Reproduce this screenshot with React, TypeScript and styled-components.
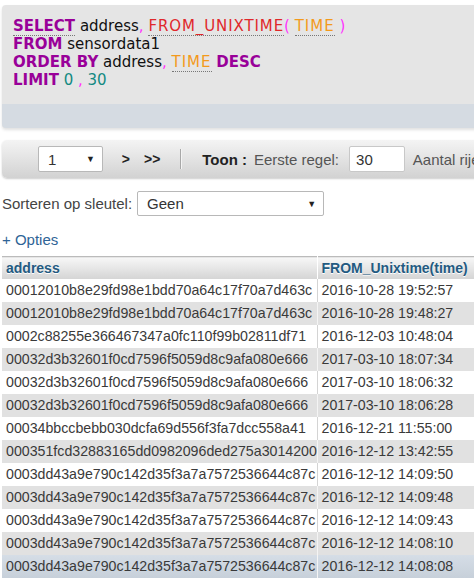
import React from 'react'
import styled, { createGlobalStyle } from 'styled-components'

const GlobalStyle = createGlobalStyle`
  html, body {
    margin: 0;
    padding: 0;
    background: #fff;
    overflow: hidden;
  }
  body {
    font-family: "Liberation Sans", Arial, sans-serif;
    font-size: 14px;
    color: #333;
  }
`

const Page = styled.div`
  width: 474px;
  height: 579px;
  overflow: hidden;
  padding-top: 5px;
  box-sizing: border-box;
`

const SqlOuter = styled.div`
  margin-left: 2px;
  width: 480px;
  background: #e5e5e5;
  border-radius: 4px 0 0 4px;
  box-shadow: 0 2px 3px rgba(0, 0, 0, 0.12);
  overflow: hidden;
`

const SqlCode = styled.pre`
  margin: 0;
  padding: 12px 0 0 11px;
  height: 99px;
  box-sizing: border-box;
  font-family: "DejaVu Sans", Verdana, sans-serif;
  font-size: 15px;
  line-height: 18px;
  color: #111;
  white-space: pre;
`

const Tools = styled.div`
  height: 24px;
  background: #d5dbe2;
`

const Kw = styled.span<{ $doc?: boolean }>`
  color: #990099;
  font-weight: bold;
  border-bottom: ${p => (p.$doc ? '1px dotted #777' : 'none')};
`

const Fn = styled.span`
  color: #e0282b;
  letter-spacing: 0.9px;
  border-bottom: 1px dotted #777;
`

const Col = styled.span<{ $doc?: boolean }>`
  color: #f39a1c;
  letter-spacing: 1px;
  border-bottom: ${p => (p.$doc ? '1px dotted #777' : 'none')};
`

const Punc = styled.span`
  color: #ff33ff;
`

const Num = styled.span`
  color: #138a82;
`

const Navigation = styled.div`
  margin: 12px 0 0 2px;
  width: 490px;
  height: 38px;
  display: flex;
  align-items: center;
  background: linear-gradient(#f4f4f4, #d2d2d2);
  border-radius: 5px;
  box-shadow: 0 1px 2px rgba(0, 0, 0, 0.2);
  white-space: nowrap;
`

const Gap = styled.span<{ $w: number }>`
  width: ${p => p.$w}px;
  flex: none;
`

const SelectBox = styled.div<{ $width: number; $height: number }>`
  width: ${p => p.$width}px;
  height: ${p => p.$height}px;
  box-sizing: border-box;
  display: flex;
  align-items: center;
  justify-content: space-between;
  padding: 0 7px 0 9px;
  background: #fff;
  border: 1px solid #b8b8b8;
  border-radius: 2px;
  color: #333;
  font-size: 15px;
`

const Caret = styled.span`
  font-size: 9px;
  color: #222;
`

const NavLink = styled.span`
  font-weight: bold;
  color: #222;
  font-size: 14px;
`

const Sep = styled.span`
  width: 1px;
  height: 20px;
  background: #a8a8a8;
  box-shadow: 1px 0 0 #f4f4f4;
`

const Label = styled.span<{ $bold?: boolean }>`
  font-size: 15px;
  color: ${p => (p.$bold ? '#222' : '#555')};
  font-weight: ${p => (p.$bold ? 'bold' : 'normal')};
`

const TextInput = styled.div`
  width: 61px;
  height: 26px;
  box-sizing: border-box;
  background: #fff;
  border: 1px solid #c8c8c8;
  border-radius: 2px;
  padding-left: 6px;
  display: flex;
  align-items: center;
  font-size: 15px;
  color: #333;
`

const SortRow = styled.div`
  margin: 13px 0 0 2px;
  display: flex;
  align-items: center;
  gap: 5px;
  font-size: 15px;
  color: #444;
`

const Options = styled.div`
  margin: 15px 0 0 2px;
  height: 18px;
  line-height: 18px;
  font-size: 15px;
  color: #2f6496;
`

const Table = styled.table`
  margin: 7px 0 0 2px;
  border-collapse: collapse;
  table-layout: fixed;
  width: 480px;
`

const Th = styled.th<{ $w: number }>`
  width: ${p => p.$w}px;
  height: 22px;
  padding: 0 4px;
  text-align: left;
  font-size: 14px;
  font-weight: bold;
  color: #235a81;
  text-shadow: 0 1px 0 #fff;
  background: linear-gradient(#f7f7f7, #d4d4d4);
  border-top: 1px solid #bbb;
  border-right: 1px solid #fff;
  box-sizing: border-box;
  white-space: nowrap;
`

const Row = styled.tr<{ $tone: 'odd' | 'even' | 'hover' }>`
  height: 23px;
  background: ${p =>
    p.$tone === 'hover'
      ? 'linear-gradient(#d5dde6, #c7d0da)'
      : p.$tone === 'even'
        ? '#e1e1e1'
        : '#fff'};
`

const Td = styled.td<{ $line: string }>`
  padding: 0 4px;
  font-size: 14.2px;
  color: #3a3a3a;
  white-space: nowrap;
  overflow: hidden;
  border-right: 1px solid ${p => p.$line};
`

const rows: [string, string][] = [
  ['00012010b8e29fd98e1bdd70a64c17f70a7d463c', '2016-10-28 19:52:57'],
  ['00012010b8e29fd98e1bdd70a64c17f70a7d463c', '2016-10-28 19:48:27'],
  ['0002c88255e366467347a0fc110f99b02811df71', '2016-12-03 10:48:04'],
  ['00032d3b32601f0cd7596f5059d8c9afa080e666', '2017-03-10 18:07:34'],
  ['00032d3b32601f0cd7596f5059d8c9afa080e666', '2017-03-10 18:06:32'],
  ['00032d3b32601f0cd7596f5059d8c9afa080e666', '2017-03-10 18:06:28'],
  ['00034bbccbebb030dcfa69d556f3fa7dcc558a41', '2016-12-21 11:55:00'],
  ['000351fcd32883165dd0982096ded275a3014200', '2016-12-12 13:42:55'],
  ['0003dd43a9e790c142d35f3a7a7572536644c87c', '2016-12-12 14:09:50'],
  ['0003dd43a9e790c142d35f3a7a7572536644c87c', '2016-12-12 14:09:48'],
  ['0003dd43a9e790c142d35f3a7a7572536644c87c', '2016-12-12 14:09:43'],
  ['0003dd43a9e790c142d35f3a7a7572536644c87c', '2016-12-12 14:08:10'],
  ['0003dd43a9e790c142d35f3a7a7572536644c87c', '2016-12-12 14:08:08'],
]

export default function App() {
  return (
    <Page>
      <GlobalStyle />
      <SqlOuter>
        <SqlCode>
          <Kw $doc>SELECT</Kw> address<Punc>,</Punc> <Fn>FROM_UNIXTIME</Fn><Punc>(</Punc>{' '}
          <Col $doc>TIME</Col> <Punc>)</Punc>
          {'\n'}
          <Kw>FROM</Kw> sensordata1
          {'\n'}
          <Kw>ORDER BY</Kw> address<Punc>,</Punc> <Col $doc>TIME</Col> <Kw>DESC</Kw>
          {'\n'}
          <Kw>LIMIT</Kw> <Num>0</Num> <Punc>,</Punc> <Num>30</Num>
        </SqlCode>
        <Tools />
      </SqlOuter>

      <Navigation>
        <Gap $w={36} />
        <SelectBox $width={70} $height={26}>
          1<Caret>▼</Caret>
        </SelectBox>
        <Gap $w={19} />
        <NavLink>&gt;</NavLink>
        <Gap $w={14} />
        <NavLink>&gt;&gt;</NavLink>
        <Gap $w={20} />
        <Sep />
        <Gap $w={21} />
        <Label $bold>Toon :</Label>
        <Gap $w={7} />
        <Label>Eerste regel:</Label>
        <Gap $w={10} />
        <TextInput>30</TextInput>
        <Gap $w={8} />
        <Label>Aantal rijen:</Label>
      </Navigation>

      <SortRow>
        <span>Sorteren op sleutel:</span>
        <SelectBox $width={187} $height={25}>
          Geen<Caret>▼</Caret>
        </SelectBox>
      </SortRow>

      <Options>+ Opties</Options>

      <Table>
        <thead>
          <tr>
            <Th $w={315}>address</Th>
            <Th $w={165}>FROM_Unixtime(time)</Th>
          </tr>
        </thead>
        <tbody>
          {rows.map(([addr, time], i) => {
            const tone = i === 12 ? 'hover' : i % 2 === 1 ? 'even' : 'odd'
            const line = tone === 'odd' ? '#d4d4d4' : '#f4f4f4'
            return (
              <Row key={i} $tone={tone}>
                <Td $line={line}>{addr}</Td>
                <Td $line={line}>{time}</Td>
              </Row>
            )
          })}
        </tbody>
      </Table>
    </Page>
  )
}
